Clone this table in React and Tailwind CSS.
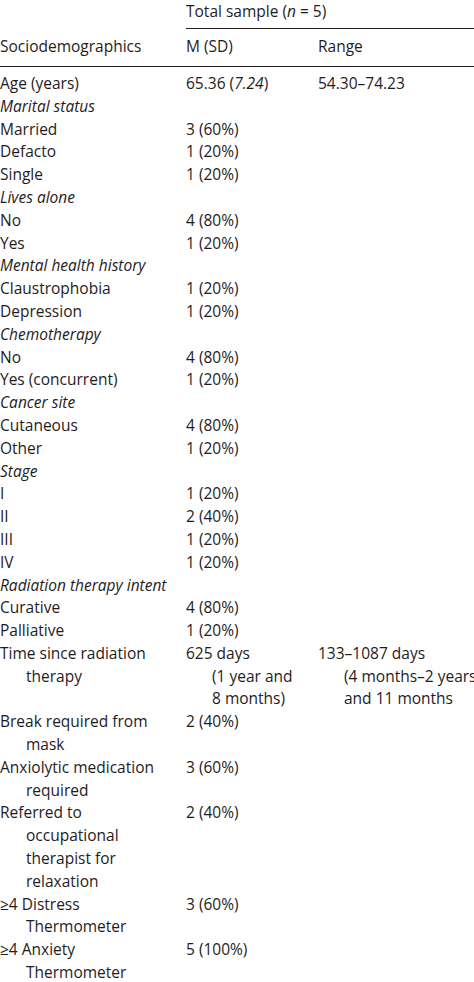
import React from "react";

const rows = [
  { a: ["Age (years)"], b: [<>65.36 (<i>7.24</i>)</>], c: ["54.30–74.23"] },
  { a: ["Marital status"], it: true },
  { a: ["Married"], b: ["3 (60%)"] },
  { a: ["Defacto"], b: ["1 (20%)"] },
  { a: ["Single"], b: ["1 (20%)"] },
  { a: ["Lives alone"], it: true },
  { a: ["No"], b: ["4 (80%)"] },
  { a: ["Yes"], b: ["1 (20%)"] },
  { a: ["Mental health history"], it: true },
  { a: ["Claustrophobia"], b: ["1 (20%)"] },
  { a: ["Depression"], b: ["1 (20%)"] },
  { a: ["Chemotherapy"], it: true },
  { a: ["No"], b: ["4 (80%)"] },
  { a: ["Yes (concurrent)"], b: ["1 (20%)"] },
  { a: ["Cancer site"], it: true },
  { a: ["Cutaneous"], b: ["4 (80%)"] },
  { a: ["Other"], b: ["1 (20%)"] },
  { a: ["Stage"], it: true },
  { a: ["I"], b: ["1 (20%)"] },
  { a: ["II"], b: ["2 (40%)"] },
  { a: ["III"], b: ["1 (20%)"] },
  { a: ["IV"], b: ["1 (20%)"] },
  { a: ["Radiation therapy intent"], it: true },
  { a: ["Curative"], b: ["4 (80%)"] },
  { a: ["Palliative"], b: ["1 (20%)"] },
  {
    a: ["Time since radiation", "therapy"],
    b: ["625 days", "(1 year and", "8 months)"],
    c: ["133–1087 days", "(4 months–2 years", "and 11 months"],
  },
  { a: ["Break required from", "mask"], b: ["2 (40%)"] },
  { a: ["Anxiolytic medication", "required"], b: ["3 (60%)"] },
  {
    a: ["Referred to", "occupational", "therapist for", "relaxation"],
    b: ["2 (40%)"],
  },
  { a: ["≥4 Distress", "Thermometer"], b: ["3 (60%)"] },
  { a: ["≥4 Anxiety", "Thermometer"], b: ["5 (100%)"] },
];

function Lines({ lines }) {
  if (!lines) return null;
  return lines.map((l, i) => (
    <div key={i} className={i === 0 ? "whitespace-nowrap" : "whitespace-nowrap pl-[26px]"}>
      {l}
    </div>
  ));
}

export default function App() {
  return (
    <div
      className="w-[474px] h-[982px] overflow-hidden bg-white text-[#1f1c1d] text-[15.5px] leading-[22.8px]"
      style={{ fontFamily: '"Open Sans", "Noto Sans", sans-serif' }}
    >
      <div className="grid grid-cols-[186px_132px_1fr]">
        <div></div>
        <div className="col-span-2 pt-[0px] pb-[5.2px] border-b border-[#231f20] whitespace-nowrap">
          Total sample (<i>n</i> = 5)
        </div>
        <div className="col-span-3 grid grid-cols-[186px_132px_1fr] pt-[5.6px] pb-[8.6px] border-b-[1.5px] border-[#231f20]">
          <div>Sociodemographics</div>
          <div>M (SD)</div>
          <div>Range</div>
        </div>
      </div>
      <div className="grid grid-cols-[186px_132px_156px] pt-[5px]">
        {rows.map((r, i) => (
          <React.Fragment key={i}>
            <div className={r.it ? "italic" : ""}>
              <Lines lines={r.a} />
            </div>
            <div>
              <Lines lines={r.b} />
            </div>
            <div className="overflow-hidden">
              <Lines lines={r.c} />
            </div>
          </React.Fragment>
        ))}
      </div>
    </div>
  );
}
